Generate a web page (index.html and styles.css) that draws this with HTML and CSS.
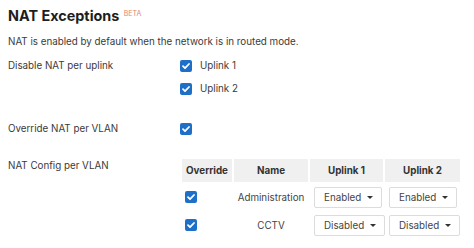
FILE: index.html
```html
<!DOCTYPE html>
<html>
<head>
<meta charset="utf-8">
<link rel="stylesheet" href="styles.css">
</head>
<body>
<div class="page">
  <h1 class="title">NAT Exceptions <sup class="beta">BETA</sup></h1>
  <p class="desc">NAT is enabled by default when the network is in routed mode.</p>

  <div class="row row-uplinks">
    <div class="label">Disable NAT per uplink</div>
    <div class="options">
      <label class="opt"><span class="cb"><svg viewBox="0 0 12 12"><path d="M3 6.2l2 2L9 4" /></svg></span>Uplink 1</label>
      <label class="opt"><span class="cb"><svg viewBox="0 0 12 12"><path d="M3 6.2l2 2L9 4" /></svg></span>Uplink 2</label>
    </div>
  </div>

  <div class="row row-override">
    <div class="label">Override NAT per VLAN</div>
    <div class="options">
      <span class="cb"><svg viewBox="0 0 12 12"><path d="M3 6.2l2 2L9 4" /></svg></span>
    </div>
  </div>

  <div class="row row-config">
    <div class="label config-label">NAT Config per VLAN</div>
    <table class="vlan">
      <colgroup>
        <col class="c-ov"><col class="c-name"><col class="c-up1"><col class="c-up2">
      </colgroup>
      <thead>
        <tr>
          <th>Override</th>
          <th>Name</th>
          <th>Uplink 1</th>
          <th>Uplink 2</th>
        </tr>
      </thead>
      <tbody>
        <tr>
          <td class="ov"><span class="cb"><svg viewBox="0 0 12 12"><path d="M3 6.2l2 2L9 4" /></svg></span></td>
          <td class="name">Administration</td>
          <td class="up"><span class="dd">Enabled <i class="caret"></i></span></td>
          <td class="up"><span class="dd">Enabled <i class="caret"></i></span></td>
        </tr>
        <tr>
          <td class="ov"><span class="cb"><svg viewBox="0 0 12 12"><path d="M3 6.2l2 2L9 4" /></svg></span></td>
          <td class="name">CCTV</td>
          <td class="up"><span class="dd">Disabled <i class="caret"></i></span></td>
          <td class="up"><span class="dd">Disabled <i class="caret"></i></span></td>
        </tr>
      </tbody>
    </table>
  </div>
</div>
</body>
</html>
```

FILE: styles.css
```css
* { box-sizing: border-box; }
html, body { margin: 0; padding: 0; background: #fff; }
body {
  font-family: Inter, "Noto Sans", "Liberation Sans", sans-serif;
  font-size: 9.8px;
  color: #3a3a3a;
}
.page { padding: 6px 8px 0 8px; }
.title {
  margin: 0;
  font-size: 14.4px;
  font-weight: 700;
  color: #1e1e1e;
  line-height: 19px;
}
.beta {
  font-size: 7px;
  font-weight: 400;
  color: #e2846f;
  vertical-align: top;
  position: relative;
  top: -2px;
  margin-left: 1px;
}
.desc {
  margin: 10px 0 0 0;
  line-height: 14px;
}
.row {
  display: grid;
  grid-template-columns: 172px 1fr;
  align-items: start;
}
.row-uplinks { margin-top: 10px; }
.label { line-height: 14px; }
.options {
  display: flex;
  flex-direction: column;
  gap: 9px;
}
.opt {
  display: flex;
  align-items: center;
  gap: 8px;
  line-height: 14px;
}
.cb {
  width: 12px;
  height: 12px;
  border-radius: 2px;
  background: #1d6fc8;
  display: inline-flex;
  align-items: center;
  justify-content: center;
  flex: none;
}
.cb svg { width: 12px; height: 12px; }
.cb path {
  fill: none;
  stroke: #fff;
  stroke-width: 1.8;
  stroke-linecap: round;
  stroke-linejoin: round;
}
.row-override { margin-top: 26px; }
.row-override .options { padding-top: 1px; }
.row-config { margin-top: 23px; }
.vlan {
  border-collapse: separate;
  border-spacing: 2px;
  margin-top: -2px;
  table-layout: fixed;
  width: 282px;
}
.c-ov { width: 50px; }
.c-name { width: 74px; }
.c-up1 { width: 73px; }
.c-up2 { width: 75px; }
.vlan th {
  background: #f0f0f0;
  font-weight: 700;
  color: #333;
  height: 23px;
  padding: 0;
  text-align: center;
}
.vlan td {
  height: 26px;
  padding: 0;
  vertical-align: middle;
}
.vlan td.ov { padding-left: 3px; }
.ov .cb { display: flex; }
.name { text-align: center; color: #444; }
.vlan td.up { padding-left: 4px; }
.dd {
  display: inline-flex;
  align-items: center;
  height: 21px;
  padding: 0 8px 0 9px;
  border: 1px solid #dcdcdc;
  border-radius: 2px;
  background: #fff;
  color: #444;
  gap: 6px;
}
.caret {
  width: 0;
  height: 0;
  border-left: 3px solid transparent;
  border-right: 3px solid transparent;
  border-top: 3px solid #333;
}
```
